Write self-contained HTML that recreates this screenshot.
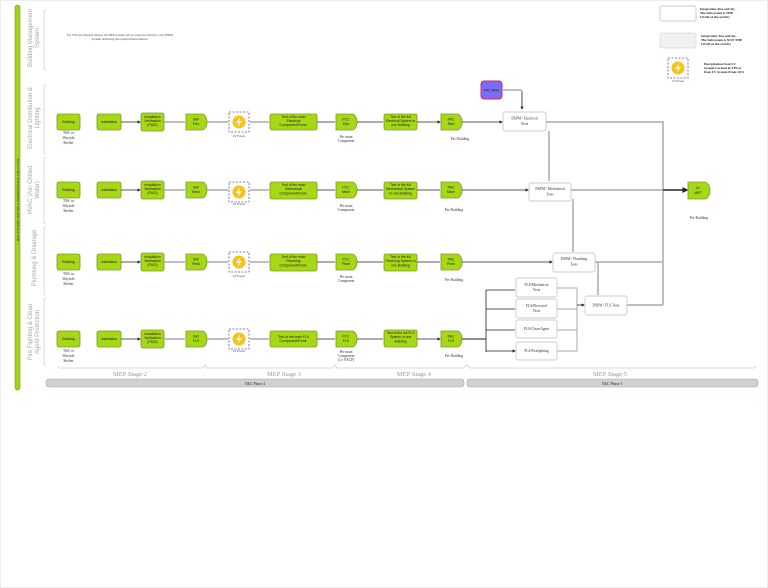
<!DOCTYPE html>
<html><head><meta charset="utf-8"><style>
html,body{margin:0;padding:0;background:#fff;width:768px;height:588px;overflow:hidden}
svg{display:block;font-family:"Liberation Serif",serif}
.g{fill:#a6d816;stroke:#7c9a28;stroke-width:.8}
.t{font-family:"Liberation Sans",sans-serif;font-size:3.4px;text-anchor:middle;fill:#222}
.s{font-size:3.6px;text-anchor:middle;fill:#333}
.w{fill:#fff;stroke:#bbb;stroke-width:.7}
.d{stroke:#222;stroke-width:.8;fill:none}
.y{stroke:#aaa;stroke-width:1.5;fill:none}
.lbl{font-family:"Liberation Sans",sans-serif;font-size:6px;fill:#a8a8a8;text-anchor:middle}
.ph{font-size:6.5px;fill:#999;text-anchor:middle}
</style></head><body>
<svg width="768" height="588" viewBox="0 0 768 588">
<defs>
<linearGradient id="gr" x1="0" y1="0" x2="0" y2="1"><stop offset="0" stop-color="#c8f21a"/><stop offset="1" stop-color="#8cc40a"/></linearGradient>
<marker id="a" markerWidth="4" markerHeight="4" refX="3" refY="2" orient="auto"><path d="M0,0L4,2L0,4z" fill="#222"/></marker>
<g id="lv"><rect x="-10" y="-10" width="20" height="20" fill="#fff" stroke="#6b4fa0" stroke-width=".8" stroke-dasharray="2,1.5"/><circle r="6.5" fill="#f7c21a"/><path d="M1.5,-5L-3,1L0,1L-1.5,5L3,-1L0,-1Z" fill="#fff"/></g>
</defs>
<rect x="0.5" y="0.5" width="767" height="587" fill="none" stroke="#eee"/>
<rect x="15" y="5" width="5" height="385" rx="2.5" fill="#9fd414" stroke="#7c9a28" stroke-width=".6"/>
<text transform="translate(19,200) rotate(-90)" style="font-size:3px;fill:#334;text-anchor:middle;font-family:'Liberation Sans'">MEP SYSTEMS TESTING &amp; COMMISSIONING (T&amp;C) FLOW</text>
<g class="lbl">
<text transform="translate(32,38) rotate(-90)">Building Management</text><text transform="translate(39,38) rotate(-90)">System</text>
<text transform="translate(32,118) rotate(-90)">Electrical Distribution &amp;</text><text transform="translate(39,118) rotate(-90)">Lighting</text>
<text transform="translate(32,190) rotate(-90)">HVAC (Air/ Chilled</text><text transform="translate(39,190) rotate(-90)">Water)</text>
<text transform="translate(36,258) rotate(-90)">Plumbing &amp; Drainage</text>
<text transform="translate(32,332) rotate(-90)">Fire Fighting &amp; Clean</text><text transform="translate(39,332) rotate(-90)">Agent Protection</text>
</g>
<g stroke="#ccc" fill="none" stroke-width=".7">
<path d="M46,10 Q44,10 44,12 L44,68 Q44,70 46,70"/><path d="M46,85 Q44,85 44,87 L44,152 Q44,154 46,154"/>
<path d="M46,157 Q44,157 44,159 L44,222 Q44,224 46,224"/><path d="M46,227 Q44,227 44,229 L44,293 Q44,295 46,295"/>
<path d="M46,298 Q44,298 44,300 L44,363 Q44,365 46,365"/>
<path d="M58,365 Q58,368 60,368 L203,368 L205,365 L207,368 L333,368 L335,365 L337,368 L463,368 L467,365 L470,368 L754,368 L756,366"/>
</g>
<text x="120" y="36" style="font-size:3px;text-anchor:middle;fill:#444">For TSS and Wayside shelters the MEP systems will be connected directly to the DSPM</text>
<text x="120" y="40" style="font-size:3px;text-anchor:middle;fill:#444">systems delivering the required functionalities.</text>

<g id="row1">
<rect class="g" fill="url(#gr)" x="57" y="114" width="23" height="16" rx="2"/><text class="t" x="68.5" y="123">Building</text>
<text class="s" x="68.5" y="134">TSS/ or</text><text class="s" x="68.5" y="139">Wayside</text><text class="s" x="68.5" y="144">Shelter</text>
<rect class="g" fill="url(#gr)" x="97" y="114" width="24" height="16" rx="2"/><text class="t" x="109" y="123">Installation</text>
<rect class="g" fill="url(#gr)" x="141" y="113" width="23" height="18" rx="2"/><text class="t" x="152.5" y="118">Installation</text><text class="t" x="152.5" y="122">Verification</text><text class="t" x="152.5" y="126">(P&amp;ID)</text>
<path class="g" fill="url(#gr)" d="M186,114h16a5,8 0 0 1 0,16h-16z"/><text class="t" x="196" y="120.5">BW</text><text class="t" x="196" y="125">Elec</text>
<use href="#lv" x="239" y="122"/><text class="s" x="239" y="137" style="font-size:3px">LV Power</text>
<rect class="g" fill="url(#gr)" x="270" y="114" width="47" height="16" rx="2"/><text class="t" x="293.5" y="118">Test of the main</text><text class="t" x="293.5" y="122">Electrical</text><text class="t" x="293.5" y="126">Component/Funct.</text>
<path class="g" fill="url(#gr)" d="M336,114h16a5,8 0 0 1 0,16h-16z"/><text class="t" x="346" y="120.5">PCC</text><text class="t" x="346" y="125">Elec</text>
<text class="s" x="346" y="138">Per main</text><text class="s" x="346" y="142">Component</text>
<rect class="g" fill="url(#gr)" x="384" y="114" width="33" height="16" rx="2"/><text class="t" x="400.5" y="118">Test of the full</text><text class="t" x="400.5" y="122">Electrical System in</text><text class="t" x="400.5" y="126">one Building</text>
<path class="g" fill="url(#gr)" d="M441,114h16a5,8 0 0 1 0,16h-16z"/><text class="t" x="451" y="120.5">PAC</text><text class="t" x="451" y="125">Elec</text>
<text class="s" x="460" y="140">Per Building</text>
<path class="d" marker-end="url(#a)" d="M121,122H140"/><path class="y" d="M164,122H185M207,122H228M250,122H269"/>
<path class="d" marker-end="url(#a)" d="M317,122H335M357,122H383M417,122H440"/>
</g>
<g id="row2">
<rect class="g" fill="url(#gr)" x="57" y="182" width="23" height="16" rx="2"/><text class="t" x="68.5" y="191">Building</text>
<text class="s" x="68.5" y="202">TSS/ or</text><text class="s" x="68.5" y="207">Wayside</text><text class="s" x="68.5" y="212">Shelter</text>
<rect class="g" fill="url(#gr)" x="97" y="182" width="24" height="16" rx="2"/><text class="t" x="109" y="191">Installation</text>
<rect class="g" fill="url(#gr)" x="141" y="181" width="23" height="18" rx="2"/><text class="t" x="152.5" y="186">Installation</text><text class="t" x="152.5" y="190">Verification</text><text class="t" x="152.5" y="194">(P&amp;ID)</text>
<path class="g" fill="url(#gr)" d="M186,182h16a5,8 0 0 1 0,16h-16z"/><text class="t" x="196" y="188.5">BW</text><text class="t" x="196" y="193">Mech</text>
<use href="#lv" x="239" y="192"/><text class="s" x="239" y="205" style="font-size:3px">LV Power</text>
<rect class="g" fill="url(#gr)" x="270" y="182" width="47" height="17" rx="2"/><text class="t" x="293.5" y="186">Test of the main</text><text class="t" x="293.5" y="190">Mechanical</text><text class="t" x="293.5" y="194.5">Component/Funct.</text>
<path class="g" fill="url(#gr)" d="M336,182h16a5,8 0 0 1 0,16h-16z"/><text class="t" x="346" y="188.5">PCC</text><text class="t" x="346" y="193">Mech</text>
<text class="s" x="346" y="207">Per main</text><text class="s" x="346" y="211">Component</text>
<rect class="g" fill="url(#gr)" x="384" y="182" width="33" height="17" rx="2"/><text class="t" x="400.5" y="186">Test of the full</text><text class="t" x="400.5" y="190">Mechanical System</text><text class="t" x="400.5" y="194.5">in one Building</text>
<path class="g" fill="url(#gr)" d="M441,182h16a5,8 0 0 1 0,16h-16z"/><text class="t" x="451" y="188.5">PAC</text><text class="t" x="451" y="193">Mech</text>
<text class="s" x="454" y="211">Per Building</text>
<path class="d" marker-end="url(#a)" d="M121,190H140"/><path class="y" d="M164,190H185M207,190H228M250,190H269"/>
<path class="d" marker-end="url(#a)" d="M317,190H335M357,190H383M417,190H440M462,190H528"/>
</g>
<g id="row3">
<rect class="g" fill="url(#gr)" x="57" y="254" width="23" height="16" rx="2"/><text class="t" x="68.5" y="263">Building</text>
<text class="s" x="68.5" y="275">TSS/ or</text><text class="s" x="68.5" y="280">Wayside</text><text class="s" x="68.5" y="285">Shelter</text>
<rect class="g" fill="url(#gr)" x="97" y="254" width="24" height="16" rx="2"/><text class="t" x="109" y="263">Installation</text>
<rect class="g" fill="url(#gr)" x="141" y="253" width="23" height="18" rx="2"/><text class="t" x="152.5" y="258">Installation</text><text class="t" x="152.5" y="262">Verification</text><text class="t" x="152.5" y="266">(P&amp;ID)</text>
<path class="g" fill="url(#gr)" d="M186,254h16a5,8 0 0 1 0,16h-16z"/><text class="t" x="196" y="260.5">BW</text><text class="t" x="196" y="265">Plmb</text>
<use href="#lv" x="239" y="262"/><text class="s" x="239" y="277" style="font-size:3px">LV Power</text>
<rect class="g" fill="url(#gr)" x="270" y="254" width="47" height="17" rx="2"/><text class="t" x="293.5" y="258">Test of the main</text><text class="t" x="293.5" y="262">Plumbing</text><text class="t" x="293.5" y="266.5">Component/Funct.</text>
<path class="g" fill="url(#gr)" d="M336,254h16a5,8 0 0 1 0,16h-16z"/><text class="t" x="346" y="260.5">PCC</text><text class="t" x="346" y="265">Plmb</text>
<text class="s" x="346" y="278">Per main</text><text class="s" x="346" y="282">Component</text>
<rect class="g" fill="url(#gr)" x="384" y="254" width="33" height="17" rx="2"/><text class="t" x="400.5" y="258">Test of the full</text><text class="t" x="400.5" y="262">Plumbing System in</text><text class="t" x="400.5" y="266.5">one Building</text>
<path class="g" fill="url(#gr)" d="M441,254h16a5,8 0 0 1 0,16h-16z"/><text class="t" x="451" y="260.5">PAC</text><text class="t" x="451" y="265">Plmb</text>
<text class="s" x="454" y="281">Per Building</text>
<path class="d" marker-end="url(#a)" d="M121,262H140"/><path class="y" d="M164,262H185M207,262H228M250,262H269"/>
<path class="d" marker-end="url(#a)" d="M317,262H335M357,262H383M417,262H440M462,262H552"/>
</g>
<g id="row4">
<rect class="g" fill="url(#gr)" x="57" y="331" width="23" height="16" rx="2"/><text class="t" x="68.5" y="340">Building</text>
<text class="s" x="68.5" y="352">TSS/ or</text><text class="s" x="68.5" y="357">Wayside</text><text class="s" x="68.5" y="362">Shelter</text>
<rect class="g" fill="url(#gr)" x="97" y="331" width="24" height="16" rx="2"/><text class="t" x="109" y="340">Installation</text>
<rect class="g" fill="url(#gr)" x="141" y="330" width="23" height="18" rx="2"/><text class="t" x="152.5" y="335">Installation</text><text class="t" x="152.5" y="339">Verification</text><text class="t" x="152.5" y="343">(P&amp;ID)</text>
<path class="g" fill="url(#gr)" d="M186,331h16a5,8 0 0 1 0,16h-16z"/><text class="t" x="196" y="337.5">BW</text><text class="t" x="196" y="342">FLS</text>
<use href="#lv" x="239" y="339"/><text class="s" x="239" y="352" style="font-size:3px">LV Power</text>
<rect class="g" fill="url(#gr)" x="270" y="331" width="47" height="16" rx="2"/><text class="t" x="293.5" y="338">Test of the main FLS</text><text class="t" x="293.5" y="342">Component/Funct.</text>
<path class="g" fill="url(#gr)" d="M336,331h16a5,8 0 0 1 0,16h-16z"/><text class="t" x="346" y="337.5">PCC</text><text class="t" x="346" y="342">FLS</text>
<text class="s" x="346" y="353">Per main</text><text class="s" x="346" y="357">Component</text><text class="s" x="346" y="361">(i.e. FACP)</text>
<rect class="g" fill="url(#gr)" x="384" y="330" width="33" height="17" rx="2"/><text class="t" x="400.5" y="334">Test of the full FLS</text><text class="t" x="400.5" y="338">System in one</text><text class="t" x="400.5" y="342.5">Building</text>
<path class="g" fill="url(#gr)" d="M441,331h16a5,8 0 0 1 0,16h-16z"/><text class="t" x="451" y="337.5">PAC</text><text class="t" x="451" y="342">FLS</text>
<text class="s" x="454" y="357">Per Building</text>
<path class="d" marker-end="url(#a)" d="M121,339H140"/><path class="y" d="M164,339H185M207,339H228M250,339H269"/>
<path class="d" marker-end="url(#a)" d="M317,339H335M357,339H383M417,339H440"/>
</g>
<path class="d" style="stroke-width:1" d="M462,339H486"/>
<path class="d" marker-end="url(#a)" d="M462,122H502"/>
<rect x="481" y="81" width="21" height="18" rx="3" fill="#7b6cf5" stroke="#e0245e" stroke-width="1"/><text class="t" x="491.5" y="91.5">PAC BPM</text>
<path class="y" d="M502,90H520Q522,90 522,92"/><path class="d" marker-end="url(#a)" d="M522,92V109"/>
<rect class="w" x="503" y="112" width="43" height="19" rx="2"/><text class="s" x="524.5" y="119.5">DSPM / Electrical</text><text class="s" x="524.5" y="125">Tests</text>
<rect class="w" x="529" y="183" width="42" height="18" rx="2"/><text class="s" x="550" y="190">DSPM / Mechanical</text><text class="s" x="550" y="195.5">Tests</text>
<rect class="w" x="553" y="253" width="42" height="19" rx="2"/><text class="s" x="574" y="260">DSPM / Plumbing</text><text class="s" x="574" y="265.5">Tests</text>
<rect class="w" x="585" y="296" width="42" height="19" rx="2"/><text class="s" x="606" y="306.5">DSPM / FLS Tests</text>
<rect class="w" x="516" y="278" width="41" height="19" rx="2"/><text class="s" x="536.5" y="286">FLS/Mechanical</text><text class="s" x="536.5" y="291">Tests</text>
<rect class="w" x="516" y="299" width="41" height="19" rx="2"/><text class="s" x="536.5" y="307">FLS/Electrical</text><text class="s" x="536.5" y="312">Tests</text>
<rect class="w" x="516" y="320" width="41" height="18" rx="2"/><text class="s" x="536.5" y="330">FLS/Clean Agent</text>
<rect class="w" x="516" y="342" width="41" height="18" rx="2"/><text class="s" x="536.5" y="352">FLS/Firefighting</text>
<path class="d" d="M486,290V352"/>
<path class="d" marker-end="url(#a)" d="M486,290H515M486,309H515M486,330H515M486,351H515"/>
<path class="y" style="stroke-width:1" d="M557,288H577V305M557,309H577M557,330H577M557,351H577V305"/>
<path class="d" marker-end="url(#a)" d="M577,305H584"/>
<path class="y" d="M546,122H663V305M549,131V181M571,190H663M573,199V252M595,262H663M598,262V295M627,305H663"/>
<path class="d" style="stroke-width:1.5" marker-end="url(#a)" d="M663,190H687"/>
<path class="g" fill="url(#gr)" d="M688,182h16a6,8.5 0 0 1 0,17h-16z"/><text class="t" x="698" y="189">LV</text><text class="t" x="698" y="194">MEP</text>
<text class="s" x="699" y="219">Per Building</text>
<text class="ph" x="130" y="376">MEP Stage 2</text><text class="ph" x="284" y="376">MEP Stage 3</text>
<text class="ph" x="414" y="376">MEP Stage 4</text><text class="ph" x="610" y="376">MEP Stage 5</text>
<rect x="46" y="379" width="418" height="8" rx="3" fill="#cdd3d3" stroke="#9aa" stroke-width=".6"/><text x="255" y="385" style="font-size:3.8px;text-anchor:middle;fill:#222">T&amp;C Phase 2</text>
<rect x="467" y="379" width="291" height="8" rx="3" fill="#cdd3d3" stroke="#9aa" stroke-width=".6"/><text x="612" y="385" style="font-size:3.8px;text-anchor:middle;fill:#222">T&amp;C Phase 3</text>
<rect x="660" y="6" width="36" height="15" rx="2" fill="#fff" stroke="#bbb" stroke-width=".7"/>
<text x="700" y="10" style="font-size:3.4px;font-weight:bold;fill:#222">Integration Test activity -</text>
<text x="700" y="14" style="font-size:3.4px;font-weight:bold;fill:#222">The Subsystem is THE</text>
<text x="700" y="18" style="font-size:3.4px;font-weight:bold;fill:#222">LEAD of the activity</text>
<rect x="660" y="33" width="36" height="15" rx="2" fill="#f1f1f1" stroke="#bbb" stroke-width=".7" stroke-dasharray="1,1"/>
<text x="701" y="37" style="font-size:3.4px;font-weight:bold;fill:#222">Integration Test activity -</text>
<text x="701" y="41" style="font-size:3.4px;font-weight:bold;fill:#222">The Subsystem is NOT THE</text>
<text x="701" y="45" style="font-size:3.4px;font-weight:bold;fill:#222">LEAD of the activity</text>
<use href="#lv" x="678" y="68"/><text class="s" x="678" y="82" style="font-size:3px">LV Power</text>
<text x="704" y="65" style="font-size:3.4px;font-weight:bold;fill:#222">Energization from LV</text>
<text x="704" y="69" style="font-size:3.4px;font-weight:bold;fill:#222">System Located in TPS or</text>
<text x="704" y="73" style="font-size:3.4px;font-weight:bold;fill:#222">from LV System From OCS</text>
</svg>
</body></html>
